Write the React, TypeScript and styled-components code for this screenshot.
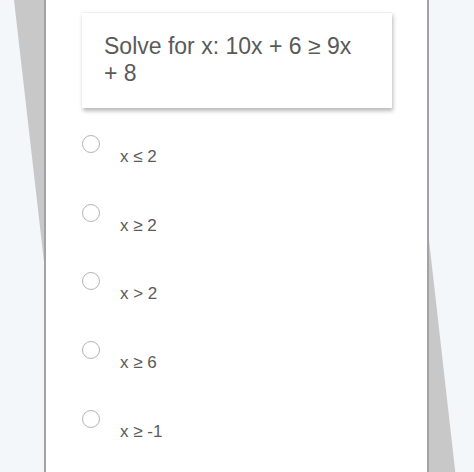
import * as React from "react";
import styled, { createGlobalStyle } from "styled-components";

const GlobalStyle = createGlobalStyle`
  html, body {
    margin: 0;
    padding: 0;
    background: #f3f7fa;
    overflow: hidden;
  }
`;

const Page = styled.div`
  display: grid;
  grid-template-columns: 44px 2px 381px 2px 1fr;
  height: 472px;
  font-family: "Liberation Sans", Arial, sans-serif;
`;

const Gutter = styled.div<{ $side: "left" | "right" }>`
  background: #f3f7fa;
  &::before {
    content: "";
    display: block;
    height: 100%;
    background: #c9c8c9;
    clip-path: ${(p) =>
      p.$side === "left"
        ? "polygon(14px 0, 100% 0, 100% 262px)"
        : "polygon(0 240px, 27px 100%, 0 100%)"};
  }
`;

const Rule = styled.div`
  background: #a3a3a5;
`;

const Card = styled.main`
  background: #fff;
  padding: 12px 0 0 36px;
`;

const Question = styled.div`
  width: 310px;
  box-sizing: border-box;
  padding: 20px 34px 21px 22px;
  background: #fff;
  border-top: 1px solid #f0f0f0;
  box-shadow: 1px 3px 4px rgba(0, 0, 0, 0.28);
  color: #5a5a5a;
  font-size: 23px;
  line-height: 27px;
`;

const Options = styled.ul`
  list-style: none;
  margin: 0;
  padding: 27px 0 0;
`;

const Option = styled.li`
  display: flex;
  align-items: flex-start;
  height: 68.7px;
`;

const Radio = styled.span`
  width: 18px;
  height: 18px;
  border: 1px solid #b4b4b4;
  border-radius: 50%;
  box-sizing: border-box;
  background: #fff;
`;

const Label = styled.span`
  margin: 12px 0 0 20px;
  color: #5a5a5a;
  font-size: 17px;
  line-height: 20px;
`;

const answers = ["x ≤ 2", "x ≥ 2", "x > 2", "x ≥ 6", "x ≥ -1"];

const App: React.FunctionComponent = () => (
  <>
    <GlobalStyle />
    <Page>
      <Gutter $side="left" />
      <Rule />
      <Card>
        <Question>Solve for x: 10x + 6 ≥ 9x + 8</Question>
        <Options>
          {answers.map((a) => (
            <Option key={a}>
              <Radio />
              <Label>{a}</Label>
            </Option>
          ))}
        </Options>
      </Card>
      <Rule />
      <Gutter $side="right" />
    </Page>
  </>
);

export default App;
